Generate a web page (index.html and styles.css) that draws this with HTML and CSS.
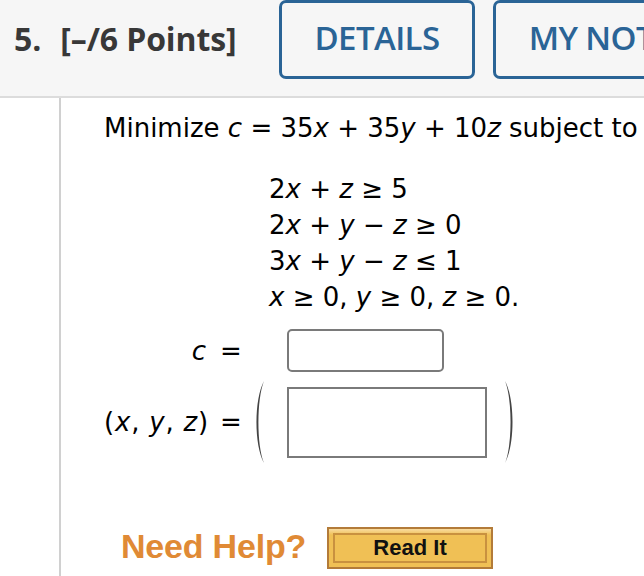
FILE: index.html
```html
<!DOCTYPE html>
<html>
<head>
<meta charset="utf-8">
<link rel="stylesheet" href="styles.css">
</head>
<body>
<div class="header">
  <div class="qtitle"><span class="qnum">5.</span><span class="qpts">[–/6 Points]</span></div>
  <div class="hbtn details">DETAILS</div>
  <div class="hbtn notes">MY NOTES</div>
</div>
<div class="content">
  <div class="question">
    <p class="prompt">Minimize <i>c</i> = 35<i>x</i> + 35<i>y</i> + 10<i>z</i> subject to</p>
    <div class="constraints">
      <div>2<i>x</i> + <i>z</i> ≥ 5</div>
      <div>2<i>x</i> + <i>y</i> − <i>z</i> ≥ 0</div>
      <div>3<i>x</i> + <i>y</i> − <i>z</i> ≤ 1</div>
      <div><i>x</i> ≥ 0, <i>y</i> ≥ 0, <i>z</i> ≥ 0.</div>
    </div>
    <div class="arow row-c">
      <span class="lbl"><i>c</i></span><span class="eq">=</span>
      <span class="inbox small"></span>
    </div>
    <div class="arow row-v">
      <span class="lbl wide">(<i>x</i>, <i>y</i>, <i>z</i>)</span><span class="eq">=</span>
      <svg class="paren" width="12" height="82" viewBox="0 0 12 82"><path d="M10 0 C 0 18, 0 64, 10 82 C 2.6 64, 2.6 18, 10 0 Z" fill="#444"/></svg>
      <span class="inbox big"></span>
      <svg class="paren" width="12" height="82" viewBox="0 0 12 82"><path d="M2 0 C 12 18, 12 64, 2 82 C 9.4 64, 9.4 18, 2 0 Z" fill="#444"/></svg>
    </div>
    <div class="help">
      <span class="needhelp">Need Help?</span>
      <span class="readit"><span class="readit-in">Read It</span></span>
    </div>
  </div>
</div>
</body>
</html>
```
FILE: styles.css
```css
html, body {
  margin: 0;
  padding: 0;
  background: #fff;
  height: 100%;
  overflow: hidden;
}
.header {
  display: flex;
  align-items: flex-start;
  background: #f6f6f6;
  height: 96px;
  border-bottom: 2px solid #dcdcdc;
  font-family: "Open Sans", sans-serif;
  white-space: nowrap;
  overflow: hidden;
}
.qtitle {
  flex-shrink: 0;
  font-weight: 700;
  font-size: 32px;
  color: #383838;
  padding: 17px 0 0 14px;
  width: 279px;
  box-sizing: border-box;
  letter-spacing: -0.1px;
}
.qnum {
  margin-right: 19px;
}
.hbtn {
  box-sizing: border-box;
  height: 79px;
  border: 3px solid #2a6496;
  border-radius: 7px;
  color: #2a6496;
  font-size: 33px;
  font-weight: 600;
  display: flex;
  align-items: center;
  justify-content: center;
  letter-spacing: -0.6px;
  flex-shrink: 0;
}
.details {
  width: 196px;
  padding-bottom: 4px;
}
.notes {
  width: 232px;
  margin-left: 18px;
  padding-bottom: 4px;
}
.content {
  margin-left: 59px;
  border-left: 2px solid #d0d0d0;
  height: 478px;
  padding-left: 43px;
  font-family: "DejaVu Sans", Verdana, sans-serif;
  font-size: 26px;
  color: #000;
  white-space: nowrap;
}
.question i {
  font-style: italic;
}
.prompt {
  margin: 0;
  padding-top: 14px;
  line-height: 32px;
}
.constraints {
  margin: 27px 0 0 165px;
  line-height: 36px;
}
.arow {
  display: flex;
  align-items: center;
}
.lbl {
  width: 102px;
  text-align: right;
}
.wide {
  letter-spacing: 0.8px;
  width: 98px;
  padding-right: 4px;
}
.eq {
  margin-left: 14px;
  width: 30px;
}
.row-c {
  margin-top: 14px;
}
.row-c .inbox {
  margin-left: 37px;
}
.inbox {
  display: block;
  box-sizing: border-box;
  border: 2px solid #7a7a7a;
  background: #fff;
}
.small {
  width: 157px;
  height: 43px;
  border-radius: 5px;
}
.big {
  width: 200px;
  height: 71px;
  margin-left: 21px;
  margin-right: 16px;
}
.row-v {
  margin-top: 9px;
}
.row-v .paren {
  display: block;
}
.row-v .eq + .paren {
  margin-left: 4px;
}
.help {
  display: flex;
  align-items: center;
  margin-top: 64px;
  margin-left: 17px;
}
.needhelp {
  font-family: "Liberation Sans", Arial, sans-serif;
  font-weight: 700;
  font-size: 34px;
  color: #e08a35;
  letter-spacing: -0.2px;
  margin-top: -3px;
}
.readit {
  display: block;
  box-sizing: border-box;
  margin-left: 21px;
  width: 166px;
  height: 42px;
  border: 2px solid #b37b39;
  background: linear-gradient(#f9dba0 0, #f0c055 6px, #f0c055 100%);
  padding: 4px;
}
.readit-in {
  display: flex;
  align-items: center;
  justify-content: center;
  height: 100%;
  box-sizing: border-box;
  border: 2px solid #c9913f;
  font-family: "Liberation Sans", Arial, sans-serif;
  font-weight: 700;
  font-size: 22px;
  color: #111;
}
```
